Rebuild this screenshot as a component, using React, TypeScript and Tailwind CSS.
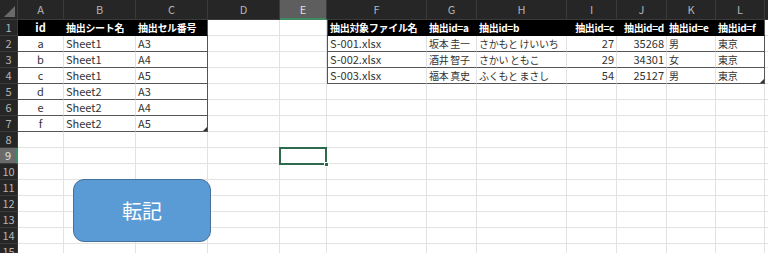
import React from "react";

const COLS = ["A", "B", "C", "D", "E", "F", "G", "H", "I", "J", "K", "L"];
const FONT = { fontFamily: '"Noto Sans CJK JP", "Noto Sans", sans-serif' };

type Cell = { t?: string; align?: "l" | "c" | "r" };

const t1: Cell[][] = [
  [{ t: "id", align: "c" }, { t: "抽出シート名" }, { t: "抽出セル番号" }],
  [{ t: "a", align: "c" }, { t: "Sheet1" }, { t: "A3" }],
  [{ t: "b", align: "c" }, { t: "Sheet1" }, { t: "A4" }],
  [{ t: "c", align: "c" }, { t: "Sheet1" }, { t: "A5" }],
  [{ t: "d", align: "c" }, { t: "Sheet2" }, { t: "A3" }],
  [{ t: "e", align: "c" }, { t: "Sheet2" }, { t: "A4" }],
  [{ t: "f", align: "c" }, { t: "Sheet2" }, { t: "A5" }],
];

const t2: Cell[][] = [
  [
    { t: "抽出対象ファイル名" },
    { t: "抽出id=a" },
    { t: "抽出id=b" },
    { t: "抽出id=c", align: "r" },
    { t: "抽出id=d", align: "r" },
    { t: "抽出id=e" },
    { t: "抽出id=f" },
  ],
  [{ t: "S-001.xlsx" }, { t: "坂本 圭一" }, { t: "さかもと けいいち" }, { t: "27", align: "r" }, { t: "35268", align: "r" }, { t: "男" }, { t: "東京" }],
  [{ t: "S-002.xlsx" }, { t: "酒井 智子" }, { t: "さかい ともこ" }, { t: "29", align: "r" }, { t: "34301", align: "r" }, { t: "女" }, { t: "東京" }],
  [{ t: "S-003.xlsx" }, { t: "福本 真史" }, { t: "ふくもと まさし" }, { t: "54", align: "r" }, { t: "25127", align: "r" }, { t: "男" }, { t: "東京" }],
];

const isCJK = (s?: string) => !!s && /[^\x00-\x7f]/.test(s);

function getCell(r: number, c: number): { cell?: Cell; table?: 1 | 2; header?: boolean; first?: boolean; last?: boolean; lastRow?: boolean } {
  if (r >= 1 && r <= 7 && c >= 0 && c <= 2) {
    return { cell: t1[r - 1][c], table: 1, header: r === 1, first: c === 0, last: c === 2, lastRow: r === 7 };
  }
  if (r >= 1 && r <= 4 && c >= 5 && c <= 11) {
    return { cell: t2[r - 1][c - 5], table: 2, header: r === 1, first: c === 5, last: c === 11, lastRow: r === 4 };
  }
  return {};
}

export default function App() {
  const rows = Array.from({ length: 15 }, (_, i) => i + 1);
  return (
    <div className="relative w-[768px] h-[253px] overflow-hidden bg-white" style={FONT}>
      <div className="grid grid-cols-[18px_46px_72px_72px_72px_47px_100px_50px_90px_50px_50px_49px_49px_1fr] grid-rows-[20px_repeat(15,16px)]">
        <div className="relative bg-[#262626] border-r border-b border-[#3a3a3a]">
          <div className="absolute right-[2px] bottom-[2px] w-0 h-0 border-l-[11px] border-l-transparent border-b-[11px] border-b-[#6a6a6a]" />
        </div>
        {COLS.map((c) => (
          <div
            key={c}
            className={
              c === "E"
                ? "flex items-center justify-center text-[11px] text-[#e0e0e0] bg-[#5e5e5e] border-r border-[#3a3a3a] border-b-2 border-b-[#3d8a63]"
                : "flex items-center justify-center text-[11px] text-[#b5b5b5] bg-[#262626] border-r border-b border-[#3a3a3a]"
            }
          >
            {c}
          </div>
        ))}
        <div className="bg-[#262626] border-b border-[#3a3a3a]" />
        {rows.map((r) => (
          <React.Fragment key={r}>
            <div
              className={
                r === 9
                  ? "flex items-center justify-center text-[11px] text-[#e0e0e0] bg-[#6a6a6a] border-b border-[#3a3a3a] border-r-2 border-r-[#3d8a63]"
                  : "flex items-center justify-center text-[11px] text-[#b5b5b5] bg-[#262626] border-r border-b border-[#3a3a3a]"
              }
            >
              {r}
            </div>
            {COLS.map((_, ci) => {
              const info = getCell(r, ci);
              if (!info.table) {
                return <div key={ci} className="border-r border-b border-[#e2e2e2]" />;
              }
              const cell = info.cell!;
              const alignCls =
                cell.align === "c" ? "justify-center" : cell.align === "r" ? "justify-end" : "justify-start";
              const size = isCJK(cell.t) ? "text-[10px] tracking-[-0.3px]" : "text-[11px]";
              const base = `relative flex items-center px-[2px] whitespace-nowrap overflow-hidden leading-none ${size}`;
              if (info.header) {
                return (
                  <div
                    key={ci}
                    className={`${base} ${alignCls} bg-black text-white font-bold border-r border-b border-black ${info.first && info.table === 2 ? "border-l border-l-[#555]" : ""} ${info.last ? "border-r-[#555]" : ""}`}
                  >
                    {cell.t}
                  </div>
                );
              }
              return (
                <div
                  key={ci}
                  className={`${base} ${alignCls} bg-white text-[#333] border-b border-b-[#555] border-r ${info.last ? "border-r-[#555]" : "border-r-[#e2e2e2]"} ${info.first && info.table === 2 ? "border-l border-l-[#555]" : ""}`}
                >
                  {cell.t}
                  {info.last && info.lastRow && (
                    <div className="absolute right-0 bottom-0 w-0 h-0 border-l-[4px] border-l-transparent border-b-[4px] border-b-[#333]" />
                  )}
                </div>
              );
            })}
            <div className="border-b border-[#e2e2e2]" />
          </React.Fragment>
        ))}
      </div>

      <div className="absolute left-[279px] top-[147px] w-[48px] h-[18px] border-2 border-[#2e6b4e]">
        <div className="absolute right-[-4px] bottom-[-4px] w-[5px] h-[5px] bg-[#2e6b4e] border border-white" />
      </div>

      <div className="absolute left-[73px] top-[179px] w-[138px] h-[63px] rounded-[11px] bg-[#5b9bd5] border border-[#41719c] flex items-center justify-center text-white text-[20px]">
        転記
      </div>
    </div>
  );
}
